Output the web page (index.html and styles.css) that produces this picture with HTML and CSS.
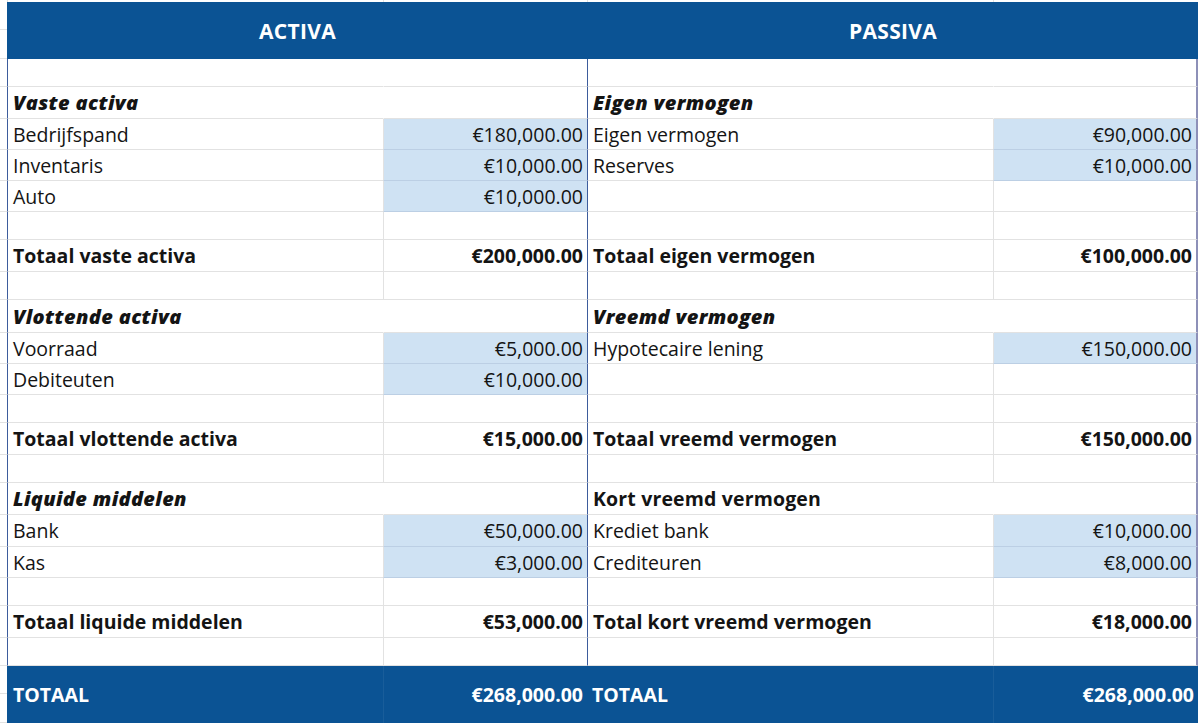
FILE: index.html
```html
<!DOCTYPE html>
<html lang="nl">
<head>
<meta charset="utf-8">
<title>Balans</title>
<link rel="stylesheet" href="styles.css">
</head>
<body>
<div class="sheet">
  <div class="row top"><div class="s"></div><div class="a"></div><div class="b"></div><div class="c3"></div><div class="d"></div><div class="e"></div></div>

  <div class="row head">
    <div class="s"></div>
    <div class="hcell">ACTIVA</div>
    <div class="hcell">PASSIVA</div>
    <div class="e"></div>
  </div>

  <div class="row empty first"><div class="s"></div><div class="a"></div><div class="b"></div><div class="c3"></div><div class="d"></div><div class="e"></div></div>

  <div class="row sec"><div class="s"></div><div class="a bi">Vaste activa</div><div class="b"></div><div class="c3 bi">Eigen vermogen</div><div class="d"></div><div class="e"></div></div>
  <div class="row data"><div class="s"></div><div class="a">Bedrijfspand</div><div class="b blue">€180,000.00</div><div class="c3">Eigen vermogen</div><div class="d blue">€90,000.00</div><div class="e"></div></div>
  <div class="row data"><div class="s"></div><div class="a">Inventaris</div><div class="b blue">€10,000.00</div><div class="c3">Reserves</div><div class="d blue">€10,000.00</div><div class="e"></div></div>
  <div class="row data"><div class="s"></div><div class="a">Auto</div><div class="b blue">€10,000.00</div><div class="c3"></div><div class="d"></div><div class="e"></div></div>
  <div class="row empty"><div class="s"></div><div class="a"></div><div class="b"></div><div class="c3"></div><div class="d"></div><div class="e"></div></div>
  <div class="row total"><div class="s"></div><div class="a">Totaal vaste activa</div><div class="b">€200,000.00</div><div class="c3">Totaal eigen vermogen</div><div class="d">€100,000.00</div><div class="e"></div></div>
  <div class="row empty"><div class="s"></div><div class="a"></div><div class="b"></div><div class="c3"></div><div class="d"></div><div class="e"></div></div>

  <div class="row sec tall"><div class="s"></div><div class="a bi">Vlottende activa</div><div class="b"></div><div class="c3 bi">Vreemd vermogen</div><div class="d"></div><div class="e"></div></div>
  <div class="row data"><div class="s"></div><div class="a">Voorraad</div><div class="b blue">€5,000.00</div><div class="c3">Hypotecaire lening</div><div class="d blue">€150,000.00</div><div class="e"></div></div>
  <div class="row data"><div class="s"></div><div class="a">Debiteuten</div><div class="b blue">€10,000.00</div><div class="c3"></div><div class="d"></div><div class="e"></div></div>
  <div class="row empty"><div class="s"></div><div class="a"></div><div class="b"></div><div class="c3"></div><div class="d"></div><div class="e"></div></div>
  <div class="row total"><div class="s"></div><div class="a">Totaal vlottende activa</div><div class="b">€15,000.00</div><div class="c3">Totaal vreemd vermogen</div><div class="d">€150,000.00</div><div class="e"></div></div>
  <div class="row empty"><div class="s"></div><div class="a"></div><div class="b"></div><div class="c3"></div><div class="d"></div><div class="e"></div></div>

  <div class="row sec"><div class="s"></div><div class="a bi">Liquide middelen</div><div class="b"></div><div class="c3 bo">Kort vreemd vermogen</div><div class="d"></div><div class="e"></div></div>
  <div class="row data tall"><div class="s"></div><div class="a">Bank</div><div class="b blue">€50,000.00</div><div class="c3">Krediet bank</div><div class="d blue">€10,000.00</div><div class="e"></div></div>
  <div class="row data"><div class="s"></div><div class="a">Kas</div><div class="b blue">€3,000.00</div><div class="c3">Crediteuren</div><div class="d blue">€8,000.00</div><div class="e"></div></div>
  <div class="row empty"><div class="s"></div><div class="a"></div><div class="b"></div><div class="c3"></div><div class="d"></div><div class="e"></div></div>
  <div class="row total"><div class="s"></div><div class="a">Totaal liquide middelen</div><div class="b">€53,000.00</div><div class="c3">Total kort vreemd vermogen</div><div class="d">€18,000.00</div><div class="e"></div></div>
  <div class="row empty"><div class="s"></div><div class="a"></div><div class="b"></div><div class="c3"></div><div class="d"></div><div class="e"></div></div>

  <div class="row foot">
    <div class="s"></div>
    <div class="fa">TOTAAL</div>
    <div class="fb">€268,000.00</div>
    <div class="fc">TOTAAL</div>
    <div class="fd">€268,000.00</div>
    <div class="e"></div>
  </div>
</div>
</body>
</html>
```

FILE: styles.css
```css
html, body {
  margin: 0;
  padding: 0;
  background: #ffffff;
}

body {
  font-family: "Open Sans", "Noto Sans", sans-serif;
  font-size: 19.5px;
  color: #141414;
}

.sheet {
  width: 1200px;
}

.row {
  display: grid;
  grid-template-columns: 7px 376px 204px 406px 205px 2px;
}

.row > div {
  box-sizing: border-box;
  border-bottom: 1px solid #e2e2e2;
  display: flex;
  align-items: center;
  white-space: nowrap;
  padding: 0 4px 0 5px;
}

.row > .s,
.row > .e {
  padding: 0;
}

.row > .e {
  border-bottom: none;
}

.a {
  border-left: 1px solid #3d5c9c;
}

.b {
  border-left: 1px solid #e2e2e2;
  justify-content: flex-end;
}

.c3 {
  border-left: 1px solid #3d5c9c;
}

.d {
  border-left: 1px solid #e2e2e2;
  border-right: 2px solid #8d90b8;
  justify-content: flex-end;
}

/* top sliver */
.top {
  height: 2px;
}
.top > div {
  border-bottom: none !important;
}
.top > .a,
.top > .c3 {
  border-left-color: #e2e2e2;
}
.top > .d {
  border-right-color: transparent;
}

/* heights */
.empty { height: 28px; }
.sec { height: 32px; }
.data { height: 31px; }
.total { height: 32px; }
.sec.tall { height: 33px; }
.data.tall { height: 32px; }

.first > .b,
.first > .d,
.sec > .b,
.sec > .d {
  border-left-color: transparent;
}

.bi {
  font-weight: 800;
  font-style: italic;
  font-size: 20px;
  letter-spacing: 0.35px;
}

.bo {
  font-weight: 700;
  letter-spacing: 0.15px;
}

.total > div {
  font-weight: 700;
}

.blue {
  background: #cfe2f3;
  border-bottom-color: #bccfe4 !important;
}

/* header */
.head {
  height: 57px;
}
.head > .s,
.foot > .s {
  background: linear-gradient(to bottom, transparent 27px, #e2e2e2 27px, #e2e2e2 28px, transparent 28px);
}
.head > .hcell {
  grid-column: span 2;
  background: #0b5394;
  color: #ffffff;
  font-weight: 700;
  font-size: 21px;
  letter-spacing: 0.3px;
  justify-content: center;
  border-bottom: none;
}

/* footer */
.foot {
  height: 57px;
}
.foot > .fa,
.foot > .fb,
.foot > .fc,
.foot > .fd {
  background: #0b5394;
  color: #ffffff;
  font-weight: 700;
  font-size: 19.5px;
  border-bottom: none;
}
.foot > .fa {
  padding-left: 6px;
}
.foot > .fb {
  justify-content: flex-end;
  border-left: 1px solid rgba(255, 255, 255, 0.06);
}
.foot > .fd {
  justify-content: flex-end;
  border-left: 1px solid rgba(255, 255, 255, 0.06);
}
```
